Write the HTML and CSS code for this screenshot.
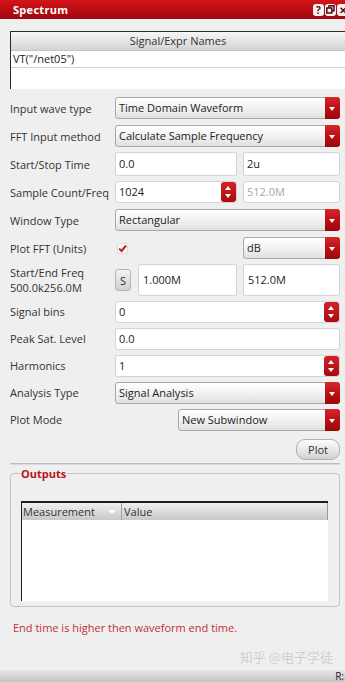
FILE: index.html
```html
<!DOCTYPE html>
<html lang="en">
<head>
  <meta charset="UTF-8">
  <title>Spectrum</title>
  <link rel="stylesheet" href="styles.css">
</head>
<body>
  <div class="titlebar">
    <span class="title">Spectrum</span>
    <div class="win-buttons">
      <span class="wbtn">?</span>
      <span class="wbtn">
        <svg width="9" height="9" viewBox="0 0 9 9"><rect x="3" y="0.8" width="5" height="5" fill="none" stroke="#5a0a0a" stroke-width="1.5"/><rect x="0.8" y="3" width="5" height="5" fill="#f4f4f4" stroke="#5a0a0a" stroke-width="1.5"/></svg>
      </span>
      <span class="wbtn">✕</span>
    </div>
  </div>

  <div class="signals">
    <div class="signals-head">Signal/Expr Names</div>
    <div class="signals-row">VT("/net05")</div>
  </div>

  <div class="form">
    <div class="row">
      <label>Input wave type</label>
      <div class="combo"><span>Time Domain Waveform</span><i class="arrow"></i></div>
    </div>
    <div class="row">
      <label>FFT Input method</label>
      <div class="combo"><span>Calculate Sample Frequency</span><i class="arrow"></i></div>
    </div>
    <div class="row">
      <label>Start/Stop Time</label>
      <div class="pair">
        <div class="field tall">0.0</div>
        <div class="field tall">2u</div>
      </div>
    </div>
    <div class="row">
      <label>Sample Count/Freq</label>
      <div class="pair">
        <div class="field spin">1024<i class="spinner"></i></div>
        <div class="field disabled">512.0M</div>
      </div>
    </div>
    <div class="row">
      <label>Window Type</label>
      <div class="combo"><span>Rectangular</span><i class="arrow"></i></div>
    </div>
    <div class="row">
      <label>Plot FFT (Units)</label>
      <div class="pair">
        <div class="check">
          <svg width="11" height="11" viewBox="0 0 11 11"><rect x="0.5" y="0.5" width="10" height="10" rx="1.5" fill="#f7f7f7" stroke="#dcdcdc"/><path d="M2.2 5.6 L4.6 8 L9 2.6" fill="none" stroke="#c41820" stroke-width="2"/></svg>
        </div>
        <div class="combo"><span>dB</span><i class="arrow"></i></div>
      </div>
    </div>
    <div class="row freq">
      <label>Start/End Freq<br>500.0k256.0M</label>
      <div class="pair">
        <div class="with-s">
          <button class="sbtn">S</button>
          <div class="field big">1.000M</div>
        </div>
        <div class="field big">512.0M</div>
      </div>
    </div>
    <div class="row short">
      <label>Signal bins</label>
      <div class="field spin">0<i class="spinner"></i></div>
    </div>
    <div class="row short">
      <label>Peak Sat. Level</label>
      <div class="field">0.0</div>
    </div>
    <div class="row short">
      <label>Harmonics</label>
      <div class="field spin">1<i class="spinner"></i></div>
    </div>
    <div class="row short">
      <label>Analysis Type</label>
      <div class="combo"><span>Signal Analysis</span><i class="arrow"></i></div>
    </div>
    <div class="row short mode">
      <label>Plot Mode</label>
      <div class="combo"><span>New Subwindow</span><i class="arrow"></i></div>
    </div>
    <div class="actions">
      <button class="plot">Plot</button>
    </div>
  </div>

  <div class="separator"></div>

  <fieldset class="outputs">
    <legend>Outputs</legend>
    <div class="results">
      <div class="results-head">
        <span class="col-meas">Measurement <i class="sort"></i></span>
        <span class="col-val">Value</span>
      </div>
    </div>
  </fieldset>

  <p class="error">End time is higher then waveform end time.</p>

  <div class="watermark">知乎 @电子学徒</div>

  <div class="statusbar"><span>R:</span></div>
</body>
</html>
```

FILE: styles.css
```css
body {
  margin: 0;
  width: 345px;
  height: 682px;
  overflow: hidden;
  background: #efefef;
  font-family: "Open Sans", "Noto Sans", sans-serif;
  font-size: 11px;
  color: #333;
}

.titlebar {
  height: 19px;
  display: flex;
  align-items: center;
  justify-content: space-between;
  padding-left: 13px;
  background: linear-gradient(#d6141c, #b30c12 60%, #9c080d);
  color: #fff;
}

.title {
  font-weight: bold;
  font-size: 11px;
  letter-spacing: 0.3px;
}

.win-buttons {
  display: flex;
  gap: 1px;
  margin-right: -3px;
}

.wbtn {
  width: 11px;
  height: 12px;
  border-radius: 3px;
  background: #f4f4f4;
  color: #5a0a0a;
  font-size: 10px;
  font-weight: bold;
  line-height: 12px;
  text-align: center;
  display: flex;
  align-items: center;
  justify-content: center;
}

.signals {
  margin: 12px 0 0 10px;
  height: 57px;
  background: #fff;
  border-top: 1px solid #2a2a2a;
  border-left: 1px solid #2a2a2a;
}

.signals-head {
  height: 18px;
  line-height: 18px;
  text-align: center;
  background: linear-gradient(#f6f6f6, #d4d4d4);
  border-bottom: 1px solid #c4c4c4;
  color: #333;
}

.signals-row {
  height: 16px;
  line-height: 16px;
  padding-left: 2px;
  border-bottom: 1px solid #d0d0d0;
  color: #222;
}

.form {
  padding: 5px 5px 0 10px;
}

.row {
  display: grid;
  grid-template-columns: 105px 1fr;
  align-items: center;
  height: 28px;
}

.row.short {
  height: 27px;
}

.row.freq {
  height: 36px;
}

.row.freq label {
  line-height: 15px;
}

.row.mode {
  grid-template-columns: 168px 1fr;
}

label {
  color: #333;
  white-space: nowrap;
}

.pair {
  display: grid;
  grid-template-columns: 122px 97px;
  gap: 6px;
  align-items: center;
}

.combo {
  position: relative;
  height: 20px;
  line-height: 20px;
  padding-left: 3px;
  border: 1px solid #a8a8a8;
  border-radius: 3px;
  background: linear-gradient(#ffffff, #f2f2f2 50%, #e0e0e0);
  color: #222;
}

.arrow {
  position: absolute;
  right: -1px;
  top: -1px;
  bottom: -1px;
  width: 15px;
  border-radius: 0 3px 3px 0;
  background: linear-gradient(#d8262c, #b80e14 55%, #9a080c);
}

.arrow::after {
  content: "";
  position: absolute;
  left: 4px;
  top: 10px;
  border-left: 3px solid transparent;
  border-right: 3px solid transparent;
  border-top: 4px solid #fff;
}

.field {
  position: relative;
  height: 20px;
  line-height: 20px;
  padding-left: 3px;
  background: #fff;
  border: 1px solid #d4d4d4;
  border-radius: 3px;
  color: #222;
}

.field.tall {
  height: 22px;
  line-height: 22px;
}

.field.big {
  height: 30px;
  line-height: 30px;
  padding-left: 4px;
}

.field.disabled {
  color: #a8a8a8;
}

.spinner {
  position: absolute;
  right: 0;
  top: 0;
  bottom: 0;
  width: 15px;
  border-radius: 3px;
  background: linear-gradient(#d42228, #a80a10);
}

.spinner::before,
.spinner::after {
  content: "";
  position: absolute;
  left: 4px;
  border-left: 3px solid transparent;
  border-right: 3px solid transparent;
}

.spinner::before {
  top: 4px;
  border-bottom: 4px solid #fff;
}

.spinner::after {
  bottom: 4px;
  border-top: 4px solid #fff;
}

.check {
  display: flex;
  align-items: center;
  padding-left: 2px;
}

.check svg {
  display: block;
}

.with-s {
  display: flex;
  align-items: center;
  gap: 7px;
}

.with-s .field {
  flex: 1;
}

.sbtn {
  width: 16px;
  height: 22px;
  padding: 0;
  border: 1px solid #b4b4b4;
  border-radius: 3px;
  background: linear-gradient(#f4f4f4, #d0d0d0);
  font-family: inherit;
  font-size: 11px;
  color: #333;
}

.actions {
  display: flex;
  justify-content: flex-end;
  padding-top: 6px;
}

.plot {
  width: 44px;
  height: 21px;
  padding: 0;
  border: 1px solid #b0b0b0;
  border-radius: 9px;
  background: linear-gradient(#fdfdfd, #e4e4e4 60%, #d0d0d0);
  font-family: inherit;
  font-size: 11px;
  color: #333;
}

.separator {
  margin: 3px 5px 0 10px;
  height: 1px;
  background: #bdbdbd;
  border-bottom: 1px solid #d9d9d9;
}

.outputs {
  margin: 1px 5px 0 10px;
  padding: 0 11px 0 10px;
  height: 139px;
  border: 1px solid #c4c4c4;
  border-radius: 4px;
}

.outputs legend {
  padding: 0 1px;
  margin-left: -1px;
  color: #b3151b;
  font-weight: bold;
  font-size: 11px;
}

.results {
  margin-top: 20px;
  height: 98px;
  background: #fff;
  border-top: 2px solid #1e1e1e;
  border-left: 1px solid #1e1e1e;
}

.results-head {
  display: flex;
  height: 17px;
  line-height: 17px;
  background: linear-gradient(#f0f0f0, #c8c8c8);
  border-right: 1px solid #9a9a9a;
}

.col-meas {
  width: 98px;
  padding-left: 1px;
  border-right: 1px solid #a0a0a0;
  position: relative;
}

.sort {
  position: absolute;
  right: 5px;
  top: 7px;
  border-left: 4px solid transparent;
  border-right: 4px solid transparent;
  border-top: 4px solid #fff;
}

.col-val {
  padding-left: 2px;
}

.error {
  margin: 13px 0 0 13px;
  color: #c23038;
  font-size: 11px;
}

.watermark {
  margin: 14px 12px 0 0;
  text-align: right;
  font-family: "Noto Sans CJK SC", sans-serif;
  font-size: 13px;
  color: #d0d0d0;
  height: 16px;
  line-height: 16px;
}

.statusbar {
  position: absolute;
  left: 0;
  right: 0;
  top: 670px;
  height: 12px;
  background: linear-gradient(#e6e6e6, #c4c4c4);
  text-align: right;
  font-size: 10px;
  line-height: 12px;
  color: #222;
}

.statusbar span {
  margin-right: 1px;
}
```
